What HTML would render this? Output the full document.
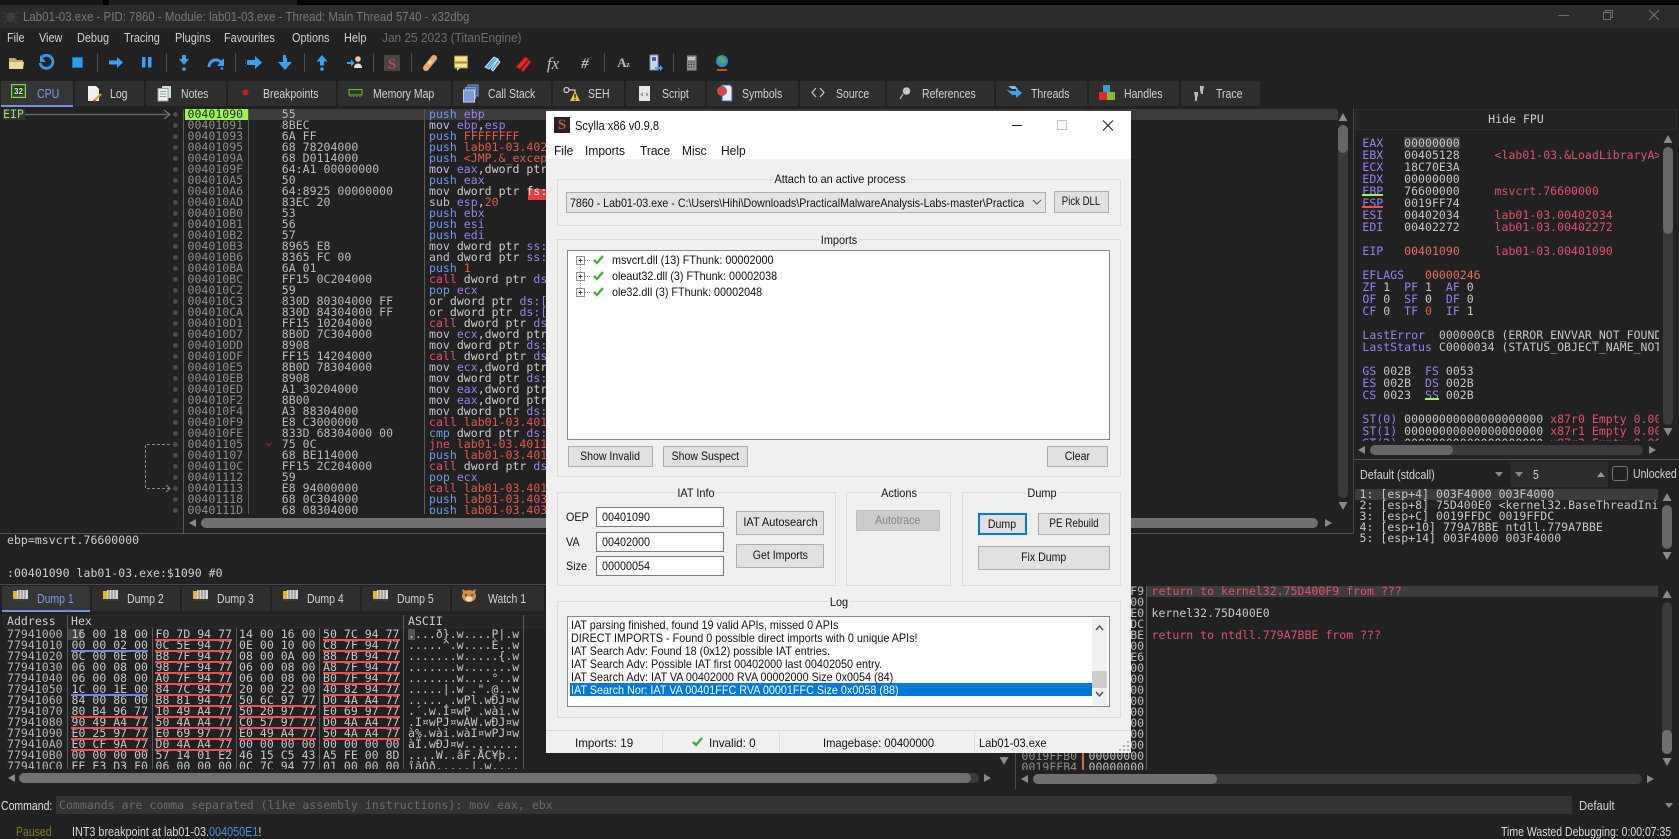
<!DOCTYPE html>
<html><head><meta charset="utf-8"><title>x32dbg Scylla</title>
<style>
html,body{margin:0;padding:0;background:#212121}
body{position:relative;width:1679px;height:837px;overflow:hidden;font-family:"Liberation Sans",sans-serif;font-size:12px;color:#d8d8d8}
div,pre,svg,span.t{box-sizing:border-box}
.a{position:absolute}
.t{position:absolute;white-space:nowrap;line-height:14px;height:14px}
pre{position:absolute;margin:0;font-family:"DejaVu Sans Mono",monospace;font-size:11.5px;line-height:11px;white-space:pre;overflow:hidden;letter-spacing:.03px}
.tab{position:absolute;top:81px;height:25px;background:#2e2e2e;border-radius:2px 2px 0 0}
.dt{position:absolute;top:586px;height:25px;background:#2e2e2e;border-radius:2px 2px 0 0}
.lb{color:#d4d4d4;font-size:12.5px;transform:scaleX(.84);transform-origin:0 50%}
.mn{transform:scaleX(.87)}
.ic{position:absolute;overflow:visible}
.vl{position:absolute;width:1px;background:#5a5a5a}
.tr{position:absolute;background:#3a3a3a;border-radius:5px}
.th{position:absolute;background:#707070;border-radius:5px}
.p{color:#6f9af0}.g{color:#bfc4d4}.v{color:#9d80f0}.c{color:#e64f70}.o{color:#e2594c}.w{color:#d0d0d0}.y{color:#d0d0d0}.b{color:#e8e8e8}
.m{color:#e0506e}.n{color:#e0705a}
.gb{position:absolute;border:1px solid #dcdcdc}
.lg{position:absolute;background:#f0f0f0;color:#111;padding:0 2px;white-space:nowrap;line-height:14px;height:14px;transform:translateX(-50%) scaleX(.91)}
.btn{position:absolute;background:#e1e1e1;border:1px solid #adadad;color:#111;text-align:center;white-space:nowrap}
.btn span{display:inline-block;transform:scaleX(.88)}
.dl{color:#111;position:absolute;white-space:nowrap;line-height:14px;height:14px;transform:scaleX(.9);transform-origin:0 50%}
.fld{position:absolute;background:#fff;border:1px solid #7a7a7a;color:#111;padding-left:5px;line-height:18px}
.fld span{display:inline-block;transform:scaleX(.9);transform-origin:0 50%}
.ul{position:absolute;height:2px;background:#ef5050}
.ub{position:absolute;height:2px;background:#6f86e6}
.sep{position:absolute;width:1px;height:19px;top:53px;background:#4c4c4c}
.bul{position:absolute;left:173px;width:5px;height:5px;border-radius:50%;background:#4a4a4a}
</style></head><body>

<!-- top strip -->
<div class="a" style="left:0;top:0;width:1679px;height:5px;background:#000"></div>
<div class="a" style="left:0;top:0;width:103px;height:5px;background:#151515"></div>
<div class="a" style="left:109px;top:0;width:188px;height:5px;background:#1c1c1c"></div>
<!-- title bar -->
<div class="a" style="left:0;top:5px;width:1679px;height:23px;background:#2b2b2b"></div>
<svg class="ic" style="left:2px;top:8px" width="17" height="17" viewBox="0 0 17 17"><ellipse cx="8.500" cy="9" rx="4" ry="5" fill="#3c3c3c"/><path d="M1 4l4 3M16 4l-4 3M1 9h3M16 9h-3M2 15l3-3M15 15l-3-3" stroke="#3c3c3c" stroke-width="1.300"/></svg>
<span class="t" style="left:23px;top:10px;color:#787878;font-size:12.5px;transform:scaleX(.92);transform-origin:0 50%">Lab01-03.exe - PID: 7860 - Module: lab01-03.exe - Thread: Main Thread 5740 - x32dbg</span>
<svg class="ic" style="left:1555px;top:8px" width="112" height="14" viewBox="0 0 112 14" fill="none" stroke="#6e6e6e"><path d="M3 7.500h11"/><path d="M48.500 4.500h7v7h-7zM50.500 4.500v-2h7v7h-2"/><path d="M94 2l10 10M104 2L94 12" stroke-width="1.200"/></svg>

<!-- menu -->
<span class="t lb mn" style="left:7px;top:31px">File</span>
<span class="t lb mn" style="left:39px;top:31px">View</span>
<span class="t lb mn" style="left:77px;top:31px">Debug</span>
<span class="t lb mn" style="left:124px;top:31px">Tracing</span>
<span class="t lb mn" style="left:175px;top:31px">Plugins</span>
<span class="t lb mn" style="left:224px;top:31px">Favourites</span>
<span class="t lb mn" style="left:292px;top:31px">Options</span>
<span class="t lb mn" style="left:344px;top:31px">Help</span>
<span class="t" style="left:382px;top:31px;color:#6e6e6e;font-size:12.5px;transform:scaleX(.95);transform-origin:0 50%">Jan 25 2023 (TitanEngine)</span>

<!-- toolbar -->
<div class="sep" style="left:97px"></div><div class="sep" style="left:166px"></div><div class="sep" style="left:235px"></div><div class="sep" style="left:304px"></div><div class="sep" style="left:373px"></div><div class="sep" style="left:411px"></div><div class="sep" style="left:604px"></div><div class="sep" style="left:673px"></div>
<svg class="ic" style="left:0;top:50px" width="760" height="26" viewBox="0 0 760 26">
<path d="M9 8h6l2 2h6v9H9z" fill="#c8a868"/><path d="M9 12h15l-1 7H9z" fill="#f0d898"/>
<path d="M42 7a6.500 6.500 0 1 1-2 6" fill="none" stroke="#3a9ae8" stroke-width="2.800"/><path d="M40 5v7h6z" fill="#3a9ae8"/>
<rect x="72.500" y="7.500" width="10" height="10" fill="#2e9ff0" stroke="#1c70b8"/>
<path d="M109 10.500h8V7l6 5.500-6 5.500v-3.500h-8z" fill="#3aa0f0"/>
<path d="M142 7h3.500v10.500H142zM148 7h3.500v10.500H148z" fill="#3aa0f0"/>
<path d="M182 5h4v4h3l-5 6-5-6h3z" fill="#3aa0f0"/><circle cx="184" cy="19" r="1.800" fill="#3aa0f0"/>
<path d="M209 17a7 7 0 0 1 12-5" fill="none" stroke="#3aa0f0" stroke-width="3"/><path d="M224 8v8h-7z" fill="#3aa0f0"/><circle cx="222" cy="18.500" r="1.300" fill="#3aa0f0"/>
<path d="M247 10h8V6l7 6.500-7 6.500v-4h-8z" fill="#3aa0f0"/><path d="M245 10h1M245 13h1M245 16h1" stroke="#2a78c0"/>
<path d="M283 5h3v3h1v4h5l-7 8-7-8h5V8h0z" fill="#3aa0f0"/>
<path d="M322 5l5.500 6.500h-3.500v4h-4v-4h-3.500z" fill="#3aa0f0"/><circle cx="322" cy="19" r="1.800" fill="#3aa0f0"/>
<path d="M347 12h4v-2.500l3.500 3.500-3.500 3.500V14h-4z" fill="#3aa0f0"/><circle cx="358" cy="9" r="2.800" fill="#f0c8a0"/><path d="M354 18c0-6 8-6 8 0z" fill="#e0e0e0"/>
<rect x="384" y="5" width="16" height="16" fill="#4c4444"/><text x="392" y="18.500" text-anchor="middle" font-family="Liberation Serif" font-weight="bold" font-size="15" fill="#a85050">S</text>
<path d="M426 18L434 8" stroke="#e8a878" stroke-width="6" stroke-linecap="round"/><path d="M429 14l2-3" stroke="#f8d8b8" stroke-width="3"/>
<rect x="454.500" y="6" width="13" height="6" fill="#f4e490" stroke="#a08838"/><rect x="454.500" y="13" width="13" height="5" fill="#f4e490" stroke="#a08838"/><path d="M457 18v3l3-3z" fill="#f4e490"/>
<path d="M485 17l9-10 4 2-9 10zM491 19l7-9 2 2-7 9z" fill="#58b0f0" stroke="#e8f4ff" stroke-width=".8"/>
<path d="M516 17l9-10 4 2-9 10zM521 20l8-10 2 2-8 10z" fill="#e82828" stroke="#901010" stroke-width=".6"/>
<text x="553" y="19" text-anchor="middle" font-family="Liberation Serif" font-style="italic" font-size="17" fill="#c0c0c0">fx</text>
<text x="585" y="18" text-anchor="middle" font-family="Liberation Serif" font-style="italic" font-weight="bold" font-size="15" fill="#c0c0c0">#</text>
<text x="622" y="17" text-anchor="middle" font-family="Liberation Serif" font-weight="bold" font-size="13" fill="#c0c0c0">A</text><text x="628" y="17" text-anchor="middle" font-family="Liberation Serif" font-weight="bold" font-size="8" fill="#c0c0c0">z</text>
<rect x="650" y="5" width="8" height="15" fill="#c8d8f0" stroke="#8090b0"/><rect x="652" y="7" width="4" height="4" fill="#4060b0"/><path d="M655 17h5v-2l3 3-3 3v-2h-5z" fill="#3aa0f0"/>
<rect x="686.500" y="5" width="10.500" height="16" fill="#8c8c8c" stroke="#282828"/><rect x="688" y="7" width="7" height="3" fill="#c8c8b8"/><path d="M688 12h7M688 14.500h7M688 17h7" stroke="#444" stroke-dasharray="1.500 1"/>
<circle cx="722" cy="11" r="6" fill="#2f8ad0"/><path d="M719 6l5 1 2 4-3 3-2-2-3-1z" fill="#50b040"/><path d="M717 20h10" stroke="#c05020" stroke-width="2"/>
</svg>

<!-- tabs -->
<div class="tab" style="left:1px;width:72px;background:#353535"></div><div class="a" style="left:1px;top:105px;width:72px;height:2px;background:#7b8fe0"></div>
<div class="tab" style="left:75px;width:69px"></div><div class="tab" style="left:146px;width:80px"></div><div class="tab" style="left:228px;width:108px"></div><div class="tab" style="left:338px;width:113px"></div><div class="tab" style="left:453px;width:98px"></div><div class="tab" style="left:553px;width:71px"></div><div class="tab" style="left:626px;width:79px"></div><div class="tab" style="left:707px;width:91px"></div><div class="tab" style="left:800px;width:85px"></div><div class="tab" style="left:887px;width:107px"></div><div class="tab" style="left:996px;width:91px"></div><div class="tab" style="left:1089px;width:90px"></div><div class="tab" style="left:1181px;width:79px"></div>
<span class="t lb" style="left:37px;top:87px;color:#7f9ae8">CPU</span>
<span class="t lb" style="left:110px;top:87px">Log</span><span class="t lb" style="left:181px;top:87px">Notes</span><span class="t lb" style="left:263px;top:87px">Breakpoints</span><span class="t lb" style="left:373px;top:87px">Memory Map</span><span class="t lb" style="left:488px;top:87px">Call Stack</span><span class="t lb" style="left:588px;top:87px">SEH</span><span class="t lb" style="left:662px;top:87px">Script</span><span class="t lb" style="left:742px;top:87px">Symbols</span><span class="t lb" style="left:836px;top:87px">Source</span><span class="t lb" style="left:922px;top:87px">References</span><span class="t lb" style="left:1031px;top:87px">Threads</span><span class="t lb" style="left:1124px;top:87px">Handles</span><span class="t lb" style="left:1216px;top:87px">Trace</span>
<svg class="ic" style="left:0;top:80px" width="1240" height="28" viewBox="0 0 1240 28">
<rect x="11.500" y="4.500" width="14" height="13" fill="#2a6a20" stroke="#a0c860"/><rect x="13.500" y="6.500" width="10" height="9" fill="#1a3a10"/><text x="18.500" y="14" text-anchor="middle" font-family="Liberation Sans" font-weight="bold" font-size="8" fill="#e8e8e8">32</text>
<path d="M88 6h8l3 3v12H88z" fill="#f0f0f0"/><path d="M95 20l6-6" stroke="#e0a030" stroke-width="2"/><path d="M93.500 21.500l1.500-1.500" stroke="#d03030" stroke-width="2"/>
<rect x="162" y="6" width="9" height="12" fill="#d8d8d8"/><rect x="158" y="8.500" width="10" height="12.500" fill="#f0f0f0" stroke="#8aa"/><path d="M160 11.500h6M160 14h6M160 16.500h6" stroke="#99a"/>
<circle cx="245.500" cy="12.500" r="3" fill="#c81820"/>
<rect x="349" y="9.500" width="13" height="5.500" fill="#2e3a1e" stroke="#70c040"/><path d="M351 16v1M354 16v1M357 16v1M360 16v1" stroke="#70c040"/>
<rect x="468" y="5" width="10" height="11" fill="#3c5a9c" stroke="#8098c8"/><rect x="465.500" y="7.500" width="10" height="11" fill="#4a6cb0" stroke="#8098c8"/><rect x="463.500" y="10" width="11" height="12" fill="#7c9cd8" stroke="#c0d0f0"/>
<path d="M564 10a2.500 2.500 0 1 1 5 0 2.500 2.500 0 0 1-5 0zM569 10h6v3" fill="none" stroke="#c8c8c8" stroke-width="1.300"/><path d="M575 11l5 10h-10z" fill="#e8c820"/><rect x="574.400" y="14" width="1.300" height="4" fill="#222"/><rect x="574.400" y="19" width="1.300" height="1.300" fill="#222"/>
<path d="M639 6h11v15h-11z" fill="#e8e8e8"/><path d="M643 13l-1.800 1.500 1.800 1.500M646 13l1.800 1.500-1.800 1.500" stroke="#778" fill="none"/>
<path d="M722 5h8l2 2v14h-10z" fill="#e8eefc" stroke="#3a60b8"/><circle cx="722" cy="11" r="5" fill="#c84848"/>
<path d="M816 8l-4 4.500 4 4.500M820 8l4 4.500-4 4.500" fill="none" stroke="#c8c8c8" stroke-width="1.200"/>
<circle cx="906.500" cy="11" r="3.800" fill="#c8c8c8"/><path d="M903 14l-3 5" stroke="#b0b0b0" stroke-width="1.300"/>
<path d="M1006 9l4 2h6V8l6 5-6 5v-3h-4z" fill="#3aa0f0"/><path d="M1008 6l4 3h6l-3-3" fill="#70c0f8"/>
<rect x="1103" y="5" width="7" height="7" fill="#30a0e0"/><rect x="1099" y="12" width="8" height="8" fill="#e02828"/><rect x="1107" y="12" width="8" height="8" fill="#80c030"/>
<path d="M1194 12h4v3l-1 3v3h-2v-4zM1200 6h4l-1 5v3h-2l-1-4z" fill="#bcbcbc"/>
</svg>

<!-- disasm gutter -->
<div class="a" style="left:3px;top:109px;width:22px;height:11px;background:#333"></div>
<pre style="left:3px;top:109px;color:#9fe070;height:11px">EIP</pre>
<svg class="ic" style="left:20px;top:105px" width="160" height="20" viewBox="0 0 160 20"><path d="M5 9.500h145" stroke="#666" stroke-width="1.500"/><path d="M144 5l6 4.500-6 4.500" stroke="#888" fill="none"/></svg>
<svg class="ic" style="left:140px;top:440px" width="35" height="54" viewBox="0 0 35 54"><path d="M30 4.500H5.500v44H30" fill="none" stroke="#8a8a8a" stroke-dasharray="3 2"/><path d="M26 45l4 3.500-4 3.500" fill="none" stroke="#8a8a8a"/></svg>
<svg class="ic" style="left:265px;top:442px" width="7" height="5" viewBox="0 0 7 5"><path d="M1 1l2.500 3L6 1" fill="none" stroke="#b02020"/></svg>
<!-- bullets -->
<div class="bul" style="top:112px"></div><div class="bul" style="top:123px"></div><div class="bul" style="top:134px"></div><div class="bul" style="top:145px"></div><div class="bul" style="top:156px"></div><div class="bul" style="top:167px"></div><div class="bul" style="top:178px"></div><div class="bul" style="top:189px"></div><div class="bul" style="top:200px"></div><div class="bul" style="top:211px"></div><div class="bul" style="top:222px"></div><div class="bul" style="top:233px"></div><div class="bul" style="top:244px"></div><div class="bul" style="top:255px"></div><div class="bul" style="top:266px"></div><div class="bul" style="top:277px"></div><div class="bul" style="top:288px"></div><div class="bul" style="top:299px"></div><div class="bul" style="top:310px"></div><div class="bul" style="top:321px"></div><div class="bul" style="top:332px"></div><div class="bul" style="top:343px"></div><div class="bul" style="top:354px"></div><div class="bul" style="top:365px"></div><div class="bul" style="top:376px"></div><div class="bul" style="top:387px"></div><div class="bul" style="top:398px"></div><div class="bul" style="top:409px"></div><div class="bul" style="top:420px"></div><div class="bul" style="top:431px"></div><div class="bul" style="top:442px"></div><div class="bul" style="top:453px"></div><div class="bul" style="top:464px"></div><div class="bul" style="top:475px"></div><div class="bul" style="top:486px"></div><div class="bul" style="top:497px"></div><div class="bul" style="top:508px"></div>

<!-- disasm -->
<div class="a" style="left:249px;top:109px;width:1089px;height:11px;background:#3c3c3c"></div>
<div class="a" style="left:185px;top:109px;width:63px;height:11px;background:#a2f05a"></div>
<div class="vl" style="left:183px;top:109px;height:424px"></div>
<div class="vl" style="left:248px;top:109px;height:405px"></div>
<div class="vl" style="left:424px;top:109px;height:405px"></div>
<pre style="left:187.500px;top:109px;height:405px;color:#8e8e8e"><span style="color:#1c2c10">00401090</span>
00401091
00401093
00401095
0040109A
0040109F
004010A5
004010A6
004010AD
004010B0
004010B1
004010B2
004010B3
004010B6
004010BA
004010BC
004010C2
004010C3
004010CA
004010D1
004010D7
004010DD
004010DF
004010E5
004010EB
004010ED
004010F2
004010F4
004010F9
004010FE
00401105
00401107
0040110C
00401112
00401113
00401118
0040111D</pre>
<pre style="left:281.800px;top:109px;height:405px;color:#bcbcbc">55
8BEC
6A FF
68 78204000
68 D0114000
64:A1 00000000
50
64:8925 00000000
83EC 20
53
56
57
8965 E8
8365 FC 00
6A 01
FF15 0C204000
59
830D 80304000 FF
830D 84304000 FF
FF15 10204000
8B0D 7C304000
8908
FF15 14204000
8B0D 78304000
8908
A1 30204000
8B00
A3 88304000
E8 C3000000
833D 68304000 00
75 0C
68 BE114000
FF15 2C204000
59
E8 94000000
68 0C304000
68 08304000</pre>
<div class="a" style="left:528px;top:189px;width:18px;height:11px;background:#e04040"></div>
<pre style="left:429px;top:109px;width:117px;height:405px"><span class="p">push</span> <span class="v">ebp</span>
<span class="g">mov</span> <span class="v">ebp</span><span class="w">,</span><span class="v">esp</span>
<span class="p">push</span> <span class="o">FFFFFFFF</span>
<span class="p">push</span> <span class="o">lab01-03.402078</span>
<span class="p">push</span> <span class="o">&lt;JMP.&amp;_except_handler3&gt;</span>
<span class="g">mov</span> <span class="v">eax</span><span class="w">,dword ptr</span> <span class="v">fs</span>
<span class="p">push</span> <span class="v">eax</span>
<span class="g">mov</span> <span class="w">dword ptr</span> <span class="b">fs:</span>
<span class="g">sub</span> <span class="v">esp</span><span class="w">,</span><span class="o">20</span>
<span class="p">push</span> <span class="v">ebx</span>
<span class="p">push</span> <span class="v">esi</span>
<span class="p">push</span> <span class="v">edi</span>
<span class="g">mov</span> <span class="w">dword ptr</span> <span class="v">ss:</span>
<span class="g">and</span> <span class="w">dword ptr</span> <span class="v">ss:</span>
<span class="p">push</span> <span class="o">1</span>
<span class="c">call</span> <span class="w">dword ptr</span> <span class="v">ds:</span>
<span class="p">pop</span> <span class="v">ecx</span>
<span class="g">or</span> <span class="w">dword ptr</span> <span class="v">ds:[</span>
<span class="g">or</span> <span class="w">dword ptr</span> <span class="v">ds:[</span>
<span class="c">call</span> <span class="w">dword ptr</span> <span class="v">ds:</span>
<span class="g">mov</span> <span class="v">ecx</span><span class="w">,dword ptr</span>
<span class="g">mov</span> <span class="w">dword ptr</span> <span class="v">ds:</span>
<span class="c">call</span> <span class="w">dword ptr</span> <span class="v">ds:</span>
<span class="g">mov</span> <span class="v">ecx</span><span class="w">,dword ptr</span>
<span class="g">mov</span> <span class="w">dword ptr</span> <span class="v">ds:</span>
<span class="g">mov</span> <span class="v">eax</span><span class="w">,dword ptr</span>
<span class="g">mov</span> <span class="v">eax</span><span class="w">,dword ptr</span>
<span class="g">mov</span> <span class="w">dword ptr</span> <span class="v">ds:</span>
<span class="c">call</span> <span class="o">lab01-03.4012A8</span>
<span class="p">cmp</span> <span class="w">dword ptr</span> <span class="v">ds:</span>
<span class="c">jne</span> <span class="o">lab01-03.401113</span>
<span class="p">push</span> <span class="o">lab01-03.4011BE</span>
<span class="c">call</span> <span class="w">dword ptr</span> <span class="v">ds:</span>
<span class="p">pop</span> <span class="v">ecx</span>
<span class="c">call</span> <span class="o">lab01-03.4011AC</span>
<span class="p">push</span> <span class="o">lab01-03.40300C</span>
<span class="p">push</span> <span class="o">lab01-03.403008</span></pre>

<!-- disasm hscroll / vscroll -->
<svg class="ic" style="left:188px;top:518px" width="10" height="10" viewBox="0 0 10 10"><path d="M8 1v8L1 5z" fill="#8a8a8a"/></svg>
<div class="th" style="left:201px;top:518px;width:1117px;height:10px"></div>
<svg class="ic" style="left:1323px;top:518px" width="10" height="10" viewBox="0 0 10 10"><path d="M2 1v8l7-4z" fill="#8a8a8a"/></svg>
<svg class="ic" style="left:1338px;top:113px" width="10" height="8" viewBox="0 0 10 8"><path d="M5 0l4.500 8h-9z" fill="#8a8a8a"/></svg>
<div class="tr" style="left:1338px;top:125px;width:10px;height:373px"></div>
<div class="th" style="left:1338px;top:125px;width:10px;height:28px;background:#666"></div>
<svg class="ic" style="left:1338px;top:502px" width="10" height="8" viewBox="0 0 10 8"><path d="M5 8L.5 0h9z" fill="#8a8a8a"/></svg>

<div class="a" style="left:0;top:533px;width:1353px;height:1px;background:#555"></div>
<pre style="left:7px;top:534.500px;height:12px;color:#d0d0d0">ebp=msvcrt.76600000</pre>
<pre style="left:7px;top:567.500px;height:12px;color:#d0d0d0">:00401090 lab01-03.exe:$1090 #0</pre>
<div class="a" style="left:0;top:584px;width:1015px;height:1px;background:#4a4a4a"></div>

<!-- Registers -->
<div class="vl" style="left:1353px;top:108px;height:426px;background:#444"></div>
<div class="a" style="left:1355px;top:109px;width:322px;height:21px;border:1px solid #2e2e2e;background:#232323"></div>
<pre style="left:1355px;top:113.500px;width:322px;text-align:center;color:#d0d0d0;height:12px">Hide FPU</pre>
<div class="a" style="left:1404px;top:137px;width:56px;height:12px;background:#3c3c3c"></div>
<pre style="left:1362.400px;top:137px;width:297px;height:304px;line-height:12px;color:#c8c8c8"><span class="v">EAX</span>   00000000
<span class="v">EBX</span>   00405128     <span class="m">&lt;lab01-03.&amp;LoadLibraryA&gt;</span>
<span class="v">ECX</span>   18C70E3A
<span class="v">EDX</span>   00000000
<span class="v">EBP</span>   76600000     <span class="m">msvcrt.76600000</span>
<span class="v">ESP</span>   0019FF74
<span class="v">ESI</span>   00402034     <span class="m">lab01-03.00402034</span>
<span class="v">EDI</span>   00402272     <span class="m">lab01-03.00402272</span>

<span class="v">EIP</span>   <span class="n">00401090</span>     <span class="m">lab01-03.00401090</span>

<span class="v">EFLAGS</span>   <span class="n">00000246</span>
<span class="v">ZF</span> 1  <span class="v">PF</span> 1  <span class="v">AF</span> 0
<span class="v">OF</span> 0  <span class="v">SF</span> 0  <span class="v">DF</span> 0
<span class="v">CF</span> 0  <span class="v">TF</span> <span class="o">0</span>  <span class="v">IF</span> 1

<span class="v">LastError</span>  000000CB (ERROR_ENVVAR_NOT_FOUND)
<span class="v">LastStatus</span> C0000034 (STATUS_OBJECT_NAME_NOT_FOUND)

<span class="v">GS</span> 002B  <span class="v">FS</span> 0053
<span class="v">ES</span> 002B  <span class="v">DS</span> 002B
<span class="v">CS</span> 0023  <span class="v">SS</span> 002B

<span class="v">ST(0)</span> 00000000000000000000 <span class="m">x87r0 Empty 0.00</span>
<span class="v">ST(1)</span> 00000000000000000000 <span class="m">x87r1 Empty 0.00</span>
<span class="v">ST(2)</span> 00000000000000000000 <span class="m">x87r2 Empty 0.00</span></pre>
<div class="a" style="left:1362px;top:194px;width:21px;height:2px;background:#a2f05a"></div>
<div class="a" style="left:1362px;top:206px;width:21px;height:2px;background:#ef5050"></div>
<div class="a" style="left:1425px;top:398px;width:14px;height:2px;background:#a2f05a"></div>
<svg class="ic" style="left:1663px;top:135px" width="10" height="8" viewBox="0 0 10 8"><path d="M5 0l4.500 8h-9z" fill="#8a8a8a"/></svg>
<div class="tr" style="left:1663px;top:147px;width:10px;height:278px"></div>
<div class="th" style="left:1663px;top:147px;width:10px;height:87px;background:#666"></div>
<svg class="ic" style="left:1663px;top:428px" width="10" height="8" viewBox="0 0 10 8"><path d="M5 8L.5 0h9z" fill="#8a8a8a"/></svg>
<svg class="ic" style="left:1357px;top:445px" width="10" height="10" viewBox="0 0 10 10"><path d="M8 1v8L1 5z" fill="#8a8a8a"/></svg>
<div class="tr" style="left:1370px;top:445px;width:273px;height:10px"></div>
<div class="th" style="left:1370px;top:445px;width:83px;height:10px;background:#666"></div>
<svg class="ic" style="left:1647px;top:445px" width="10" height="10" viewBox="0 0 10 10"><path d="M2 1v8l7-4z" fill="#8a8a8a"/></svg>
<div class="a" style="left:1354px;top:459px;width:325px;height:1px;background:#555"></div>

<!-- call conv -->
<span class="t lb" style="left:1359.500px;top:468px;transform:scaleX(.86)">Default (stdcall)</span>
<svg class="ic" style="left:1495px;top:472px" width="8" height="5" viewBox="0 0 8 5"><path d="M0 0h8L4 5z" fill="#888"/></svg>
<div class="a" style="left:1510px;top:462px;width:98px;height:25px;background:#2c2c2c;border-radius:2px"></div>
<svg class="ic" style="left:1515px;top:472px" width="8" height="5" viewBox="0 0 8 5"><path d="M0 0h8L4 5z" fill="#888"/></svg>
<span class="t lb" style="left:1533px;top:468px">5</span>
<svg class="ic" style="left:1597px;top:472px" width="8" height="5" viewBox="0 0 8 5"><path d="M4 0l4 5H0z" fill="#999"/></svg>
<div class="a" style="left:1612px;top:466px;width:16px;height:15px;border:1px solid #777;border-radius:3px"></div>
<span class="t lb" style="left:1633px;top:467px">Unlocked</span>
<div class="a" style="left:1355px;top:489px;width:303px;height:11px;background:#3c3c3c"></div>
<pre style="left:1359.500px;top:489px;width:298px;height:56px;color:#c8c8c8">1: [esp+4] 003F4000 003F4000
2: [esp+8] 75D400E0 &lt;kernel32.BaseThreadInitThunk&gt;
3: [esp+C] 0019FFDC 0019FFDC
4: [esp+10] 779A7BBE ntdll.779A7BBE
5: [esp+14] 003F4000 003F4000</pre>
<svg class="ic" style="left:1662px;top:493px" width="10" height="8" viewBox="0 0 10 8"><path d="M5 0l4.500 8h-9z" fill="#8a8a8a"/></svg>
<div class="th" style="left:1662px;top:505px;width:10px;height:44px;background:#666"></div>
<svg class="ic" style="left:1662px;top:552px" width="10" height="8" viewBox="0 0 10 8"><path d="M5 8L.5 0h9z" fill="#8a8a8a"/></svg>

<!-- dump tabs -->
<div class="dt" style="left:2px;width:88px;background:#353535"></div><div class="a" style="left:2px;top:610px;width:88px;height:2px;background:#7b8fe0"></div>
<div class="dt" style="left:92px;width:88px"></div><div class="dt" style="left:182px;width:88px"></div><div class="dt" style="left:272px;width:88px"></div><div class="dt" style="left:362px;width:88px"></div><div class="dt" style="left:452px;width:92px"></div>
<span class="t lb" style="left:37px;top:592px;color:#7f9ae8">Dump 1</span><span class="t lb" style="left:127px;top:592px">Dump 2</span><span class="t lb" style="left:217px;top:592px">Dump 3</span><span class="t lb" style="left:307px;top:592px">Dump 4</span><span class="t lb" style="left:397px;top:592px">Dump 5</span><span class="t lb" style="left:488px;top:592px">Watch 1</span>
<svg class="ic" style="left:0;top:586px" width="490" height="24" viewBox="0 0 490 24">
<g id="tk"><rect x="17" y="4" width="11" height="9" fill="#d8d8d8"/><path d="M19 4v9M22 4v9M25 4v9" stroke="#777"/><rect x="13" y="5" width="4" height="8" fill="#e8b820"/><path d="M13 14h15" stroke="#444"/></g>
<use href="#tk" x="90"/><use href="#tk" x="180"/><use href="#tk" x="270"/><use href="#tk" x="360"/>
<ellipse cx="469" cy="10" rx="7" ry="6" fill="#d09048"/><path d="M463 7l-1-4 4 2M475 7l1-4-4 2" fill="#d09048"/><ellipse cx="469" cy="13" rx="3.500" ry="2.500" fill="#f0dcb8"/><circle cx="466" cy="9" r=".9" fill="#222"/><circle cx="472" cy="9" r=".9" fill="#222"/>
</svg>

<!-- dump -->
<div class="a" style="left:3px;top:615px;width:1009px;height:13px;background:#242424;border:1px solid #2a2a2a"></div>
<pre style="left:7px;top:615.500px;height:12px;color:#d0d0d0">Address</pre>
<pre style="left:71px;top:615.500px;height:12px;color:#d0d0d0">Hex</pre>
<pre style="left:408px;top:615.500px;height:12px;color:#d0d0d0">ASCII</pre>
<div class="vl" style="left:67px;top:615px;height:154px"></div><div class="vl" style="left:152px;top:628px;height:141px"></div><div class="vl" style="left:236px;top:628px;height:141px"></div><div class="vl" style="left:319px;top:628px;height:141px"></div><div class="vl" style="left:403px;top:615px;height:154px"></div><div class="vl" style="left:523px;top:615px;height:154px"></div>
<div class="a" style="left:68px;top:629px;width:15px;height:11px;background:#444"></div>
<div class="a" style="left:408px;top:629px;width:7px;height:11px;background:#555"></div>
<pre style="left:7px;top:629px;height:140px;color:#b8b8b8">77941000
77941010
77941020
77941030
77941040
77941050
77941060
77941070
77941080
77941090
779410A0
779410B0
779410C0</pre>
<pre style="left:71.500px;top:629px;height:140px;color:#c8c8c8">16 00 18 00
00 00 02 00
0C 00 0E 00
06 00 08 00
06 00 08 00
1C 00 1E 00
84 00 86 00
80 B4 96 77
90 49 A4 77
E0 25 97 77
E0 CF 9A 77
00 00 00 00
EE E3 D3 F0</pre>
<pre style="left:155.500px;top:629px;height:140px;color:#c8c8c8">F0 7D 94 77
0C 5E 94 77
B8 7F 94 77
98 7F 94 77
A0 7F 94 77
84 7C 94 77
B8 81 94 77
10 49 A4 77
50 4A A4 77
E0 69 97 77
D0 4A A4 77
57 14 01 E2
06 00 00 00</pre>
<pre style="left:239px;top:629px;height:140px;color:#c8c8c8">14 00 16 00
0E 00 10 00
08 00 0A 00
06 00 08 00
06 00 08 00
20 00 22 00
50 6C 97 77
50 20 97 77
C0 57 97 77
E0 49 A4 77
00 00 00 00
46 15 C5 43
0C 7C 94 77</pre>
<pre style="left:323px;top:629px;height:140px;color:#c8c8c8">50 7C 94 77
C8 7F 94 77
88 7B 94 77
A8 7F 94 77
B0 7F 94 77
40 82 94 77
D0 4A A4 77
E0 69 97 77
D0 4A A4 77
50 4A A4 77
00 00 00 00
A5 FE 00 8D
01 00 00 00</pre>
<pre style="left:408px;top:629px;height:140px;width:115px;color:#c8c8c8">....ð}.w....P|.w
.....^.w....È..w
.......w.....{.w
.......w.......w
.......w....°..w
.....|.w .".@..w
.....¸.wPl.wÐJ¤w
.´.w.I¤wP .wài.w
.I¤wPJ¤wÀW.wÐJ¤w
à%.wài.wàI¤wPJ¤w
àÏ.wÐJ¤w........
....W..âF.ÅC¥þ..
îãÓð.....|.w....</pre>
<!-- underlines -->
<div class="a" style="left:0;top:1px">
<div class="ul" style="left:155px;top:638px;width:77px"></div><div class="ul" style="left:323px;top:638px;width:77px"></div>
<div class="ub" style="left:71px;top:649px;width:77px"></div><div class="ul" style="left:155px;top:649px;width:77px"></div><div class="ul" style="left:323px;top:649px;width:77px"></div>
<div class="ul" style="left:155px;top:660px;width:77px"></div><div class="ul" style="left:323px;top:660px;width:77px"></div>
<div class="ul" style="left:155px;top:671px;width:77px"></div><div class="ul" style="left:323px;top:671px;width:77px"></div>
<div class="ul" style="left:155px;top:682px;width:77px"></div><div class="ul" style="left:323px;top:682px;width:77px"></div>
<div class="ub" style="left:71px;top:693px;width:77px"></div><div class="ul" style="left:155px;top:693px;width:77px"></div><div class="ul" style="left:323px;top:693px;width:77px"></div>
<div class="ul" style="left:155px;top:704px;width:77px"></div><div class="ul" style="left:239px;top:704px;width:77px"></div><div class="ul" style="left:323px;top:704px;width:77px"></div>
<div class="ul" style="left:71px;top:715px;width:77px"></div><div class="ul" style="left:155px;top:715px;width:77px"></div><div class="ul" style="left:239px;top:715px;width:77px"></div><div class="ul" style="left:323px;top:715px;width:77px"></div>
<div class="ul" style="left:71px;top:726px;width:77px"></div><div class="ul" style="left:155px;top:726px;width:77px"></div><div class="ul" style="left:239px;top:726px;width:77px"></div><div class="ul" style="left:323px;top:726px;width:77px"></div>
<div class="ul" style="left:71px;top:737px;width:77px"></div><div class="ul" style="left:155px;top:737px;width:77px"></div><div class="ul" style="left:239px;top:737px;width:77px"></div><div class="ul" style="left:323px;top:737px;width:77px"></div>
<div class="ul" style="left:71px;top:748px;width:77px"></div><div class="ul" style="left:155px;top:748px;width:77px"></div>
</div>
<!-- dump scrollbars -->
<svg class="ic" style="left:7px;top:773px" width="10" height="10" viewBox="0 0 10 10"><path d="M8 1v8L1 5z" fill="#8a8a8a"/></svg>
<div class="tr" style="left:19px;top:773px;width:960px;height:10px"></div>
<div class="th" style="left:19px;top:773px;width:952px;height:10px"></div>
<svg class="ic" style="left:982px;top:773px" width="10" height="10" viewBox="0 0 10 10"><path d="M2 1v8l7-4z" fill="#8a8a8a"/></svg>
<svg class="ic" style="left:999px;top:757px" width="10" height="8" viewBox="0 0 10 8"><path d="M5 8L.5 0h9z" fill="#8a8a8a"/></svg>
<div class="vl" style="left:1015px;top:586px;height:203px;background:#4a4a4a"></div>

<!-- stack -->
<div class="a" style="left:1147px;top:586px;width:511px;height:11px;background:#3c3c3c"></div>
<div class="vl" style="left:1146px;top:586px;height:184px"></div>
<div class="a" style="left:1082px;top:586px;width:2px;height:184px;background:#e06050"></div>
<pre style="left:1021.500px;top:586px;height:184px;color:#8e8e8e">0019FF74
0019FF78
0019FF7C
0019FF80
0019FF84
0019FF88
0019FF8C
0019FF90
0019FF94
0019FF98
0019FF9C
0019FFA0
0019FFA4
0019FFA8
0019FFAC
0019FFB0
0019FFB4</pre>
<pre style="left:1088.500px;top:586px;height:184px;color:#c0c0c0">75D400F9
003F4000
75D400E0
0019FFDC
779A7BBE
003F4000
2C8D22E6
00000000
00000000
003F4000
00000000
00000000
00000000
00000000
00000000
00000000
00000000</pre>
<pre style="left:1151.500px;top:586px;height:60px;color:#c8c8c8"><span class="m">return to kernel32.75D400F9 from ???</span>

kernel32.75D400E0

<span class="m">return to ntdll.779A7BBE from ???</span></pre>
<svg class="ic" style="left:1662px;top:590px" width="10" height="8" viewBox="0 0 10 8"><path d="M5 0l4.500 8h-9z" fill="#8a8a8a"/></svg>
<div class="tr" style="left:1662px;top:602px;width:10px;height:152px"></div>
<div class="th" style="left:1662px;top:730px;width:10px;height:24px"></div>
<svg class="ic" style="left:1662px;top:758px" width="10" height="8" viewBox="0 0 10 8"><path d="M5 8L.5 0h9z" fill="#8a8a8a"/></svg>
<svg class="ic" style="left:1020px;top:774px" width="10" height="10" viewBox="0 0 10 10"><path d="M8 1v8L1 5z" fill="#8a8a8a"/></svg>
<div class="tr" style="left:1033px;top:774px;width:609px;height:10px"></div>
<div class="th" style="left:1033px;top:774px;width:184px;height:10px"></div>
<svg class="ic" style="left:1645px;top:774px" width="10" height="10" viewBox="0 0 10 10"><path d="M2 1v8l7-4z" fill="#8a8a8a"/></svg>

<!-- command -->
<span class="t lb" style="left:1px;top:799px;color:#e0e0e0">Command:</span>
<div class="a" style="left:56px;top:796px;width:1516px;height:18px;background:#333"></div>
<pre style="left:59px;top:800px;height:12px;color:#6c6c6c">Commands are comma separated (like assembly instructions): mov eax, ebx</pre>
<span class="t lb" style="left:1578.500px;top:799px;transform:scaleX(.9)">Default</span>
<svg class="ic" style="left:1665px;top:803px" width="8" height="5" viewBox="0 0 8 5"><path d="M0 0h8L4 5z" fill="#888"/></svg>

<!-- status -->
<span class="t lb" style="left:15.500px;top:825px;color:#7c7c20">Paused</span>
<span class="t lb" style="left:71.500px;top:825px;color:#d8d8d8;transform:scaleX(.865)">INT3 breakpoint at lab01-03.<span style="color:#4c8ce0">004050E1</span>!</span>
<span class="t lb" style="left:1501px;top:825px;color:#d8d8d8;transform:scaleX(.84)">Time Wasted Debugging: 0:00:07:35</span>

<!-- ============ Scylla dialog ============ -->
<div class="a" style="left:546px;top:111px;width:585px;height:642px;background:#f0f0f0"></div>
<div class="a" style="left:546px;top:111px;width:585px;height:48px;background:#fff"></div>
<div class="a" style="left:554px;top:117px;width:16px;height:16px;background:#2a2222"></div>
<span class="a" style="left:554px;top:117px;width:16px;height:16px;line-height:16px;text-align:center;font-family:'Liberation Serif',serif;font-weight:bold;font-size:15px;color:#c05050">S</span>
<span class="dl" style="left:575px;top:119px;font-size:12.500px;transform:scaleX(.89)">Scylla x86 v0.9.8</span>
<svg class="ic" style="left:1005px;top:118px" width="115" height="15" viewBox="0 0 115 15"><path d="M7 7.500h10" stroke="#222" stroke-width="1"/><rect x="52.500" y="2.500" width="9" height="9" fill="none" stroke="#c0c0c0"/><path d="M98 2.500l10 10M108 2.500l-10 10" stroke="#222" stroke-width="1.100"/></svg>
<span class="dl" style="left:553.500px;top:144px;font-size:12.500px;transform:scaleX(.96)">File</span><span class="dl" style="left:585px;top:144px;font-size:12.500px;transform:scaleX(.96)">Imports</span><span class="dl" style="left:640px;top:144px;font-size:12.500px;transform:scaleX(.96)">Trace</span><span class="dl" style="left:681.500px;top:144px;font-size:12.500px;transform:scaleX(.96)">Misc</span><span class="dl" style="left:720.500px;top:144px;font-size:12.500px;transform:scaleX(.96)">Help</span>

<!-- attach -->
<div class="gb" style="left:557px;top:179px;width:564px;height:47px"></div>
<span class="lg" style="left:840px;top:172px">Attach to an active process</span>
<div class="a" style="left:566px;top:192px;width:480px;height:21px;background:#e4e4e4;border:1px solid #adadad"></div>
<div class="a" style="left:570px;top:196px;width:511px;height:14px;line-height:14px;overflow:hidden;white-space:nowrap;color:#111;transform:scaleX(.888);transform-origin:0 50%">7860 - Lab01-03.exe - C:\Users\Hihi\Downloads\PracticalMalwareAnalysis-Labs-master\Practical Malware Analysis Labs</div>
<svg class="ic" style="left:1032px;top:199px" width="10" height="7" viewBox="0 0 10 7"><path d="M1 1l4 4 4-4" fill="none" stroke="#555"/></svg>
<div class="btn" style="left:1054px;top:191px;width:55px;height:22px;line-height:19px"><span style="transform:scaleX(.8)">Pick DLL</span></div>

<!-- imports -->
<div class="gb" style="left:557px;top:239px;width:564px;height:238px"></div>
<span class="lg" style="left:839px;top:233px">Imports</span>
<div class="a" style="left:567px;top:250px;width:543px;height:190px;background:#fff;border:1px solid #828790"></div>
<svg class="ic" style="left:574px;top:254px" width="34" height="44" viewBox="0 0 34 44" shape-rendering="crispEdges">
<g fill="#fff" stroke="#8a8a9a"><rect x="2.500" y="2.500" width="8" height="8"/><rect x="2.500" y="18.500" width="8" height="8"/><rect x="2.500" y="34.500" width="8" height="8"/></g>
<path d="M4.500 6.500h4M6.500 4.500v4M4.500 22.500h4M6.500 20.500v4M4.500 38.500h4M6.500 36.500v4" stroke="#2040a0"/>
<path d="M11 6.500h6M11 22.500h6M11 38.500h6M6.500 11v7M6.500 27v7" stroke="#999" stroke-dasharray="1 1"/></svg>
<svg class="ic" style="left:593px;top:254px" width="12" height="44" viewBox="0 0 12 44" fill="none" stroke="#4aa84a" stroke-width="2.400"><path d="M1 6l3 3 6-7"/><path d="M1 22l3 3 6-7"/><path d="M1 38l3 3 6-7"/></svg>
<span class="dl" style="left:611.500px;top:253px">msvcrt.dll (13) FThunk: 00002000</span>
<span class="dl" style="left:611.500px;top:269px">oleaut32.dll (3) FThunk: 00002038</span>
<span class="dl" style="left:611.500px;top:285px">ole32.dll (3) FThunk: 00002048</span>
<div class="btn" style="left:568px;top:446px;width:85px;height:21px;line-height:18px"><span>Show Invalid</span></div>
<div class="btn" style="left:663px;top:446px;width:85px;height:21px;line-height:18px"><span>Show Suspect</span></div>
<div class="btn" style="left:1047px;top:446px;width:61px;height:21px;line-height:18px"><span>Clear</span></div>

<!-- IAT info -->
<div class="gb" style="left:557px;top:492px;width:279px;height:94px"></div>
<span class="lg" style="left:696px;top:486px">IAT Info</span>
<span class="dl" style="left:565.500px;top:510px">OEP</span>
<span class="dl" style="left:565.500px;top:535px">VA</span>
<span class="dl" style="left:565.500px;top:559px">Size</span>
<div class="fld" style="left:596px;top:507px;width:128px;height:20px"><span>00401090</span></div>
<div class="fld" style="left:596px;top:532px;width:128px;height:20px"><span>00402000</span></div>
<div class="fld" style="left:596px;top:556px;width:128px;height:20px"><span>00000054</span></div>
<div class="btn" style="left:736px;top:511px;width:88px;height:24px;line-height:21px"><span style="transform:scaleX(.917)">IAT Autosearch</span></div>
<div class="btn" style="left:736px;top:544px;width:88px;height:24px;line-height:21px"><span>Get Imports</span></div>

<!-- actions -->
<div class="gb" style="left:846px;top:492px;width:105px;height:94px"></div>
<span class="lg" style="left:899px;top:486px">Actions</span>
<div class="btn" style="left:856px;top:510px;width:84px;height:21px;line-height:18px;background:#ccc;border-color:#bfbfbf;color:#838383"><span>Autotrace</span></div>

<!-- dump -->
<div class="gb" style="left:962px;top:492px;width:159px;height:94px"></div>
<span class="lg" style="left:1042px;top:486px">Dump</span>
<div class="btn" style="left:978px;top:513px;width:49px;height:22px;line-height:18px;border:2px solid #0078d7"><span>Dump</span></div>
<div class="btn" style="left:1038px;top:513px;width:72px;height:22px;line-height:19px"><span style="transform:scaleX(.82)">PE Rebuild</span></div>
<div class="btn" style="left:978px;top:546px;width:132px;height:24px;line-height:21px"><span>Fix Dump</span></div>

<!-- log -->
<div class="gb" style="left:557px;top:601px;width:564px;height:117px"></div>
<span class="lg" style="left:838.500px;top:595px">Log</span>
<div class="a" style="left:567px;top:616px;width:543px;height:91px;background:#fff;border:1px solid #828790"></div>
<div class="a" style="left:569.500px;top:683px;width:522px;height:13px;background:#0078d7"></div>
<span class="dl" style="left:570.500px;top:618px">IAT parsing finished, found 19 valid APIs, missed 0 APIs</span>
<span class="dl" style="left:570.500px;top:631px">DIRECT IMPORTS - Found 0 possible direct imports with 0 unique APIs!</span>
<span class="dl" style="left:570.500px;top:644px">IAT Search Adv: Found 18 (0x12) possible IAT entries.</span>
<span class="dl" style="left:570.500px;top:657px">IAT Search Adv: Possible IAT first 00402000 last 00402050 entry.</span>
<span class="dl" style="left:570.500px;top:670px">IAT Search Adv: IAT VA 00402000 RVA 00002000 Size 0x0054 (84)</span>
<span class="dl" style="left:570.500px;top:683px;color:#fff">IAT Search Nor: IAT VA 00401FFC RVA 00001FFC Size 0x0058 (88)</span>
<div class="a" style="left:1092px;top:618px;width:15px;height:87px;background:#f0f0f0"></div>
<div class="a" style="left:1092px;top:671px;width:15px;height:17px;background:#cdcdcd"></div>
<svg class="ic" style="left:1095px;top:624px" width="9" height="76" viewBox="0 0 9 76" fill="none" stroke="#555" stroke-width="1.500"><path d="M1 6l3.500-4L8 6"/><path d="M1 68l3.500 4L8 68"/></svg>

<!-- status bar -->
<div class="a" style="left:546px;top:730px;width:585px;height:1px;background:#d9d9d9"></div>
<div class="vl" style="left:662px;top:732px;height:20px;background:#dcdcdc"></div><div class="vl" style="left:779px;top:732px;height:20px;background:#dcdcdc"></div><div class="vl" style="left:974px;top:732px;height:20px;background:#dcdcdc"></div>
<span class="dl" style="left:575px;top:736px;transform:scaleX(.97)">Imports: 19</span>
<svg class="ic" style="left:692px;top:737px" width="12" height="10" viewBox="0 0 12 10" fill="none" stroke="#4aa84a" stroke-width="2.400"><path d="M1 5l3 3 6-7"/></svg>
<span class="dl" style="left:709px;top:736px;transform:scaleX(.97)">Invalid: 0</span>
<span class="dl" style="left:823px;top:736px;transform:scaleX(.93)">Imagebase: 00400000</span>
<span class="dl" style="left:979px;top:736px;transform:scaleX(.92)">Lab01-03.exe</span>
<svg class="ic" style="left:1119px;top:741px" width="11" height="11" viewBox="0 0 11 11" fill="#b4b4b4"><rect x="8" y="0" width="2" height="2"/><rect x="4" y="4" width="2" height="2"/><rect x="8" y="4" width="2" height="2"/><rect x="0" y="8" width="2" height="2"/><rect x="4" y="8" width="2" height="2"/><rect x="8" y="8" width="2" height="2"/></svg>

</body></html>
